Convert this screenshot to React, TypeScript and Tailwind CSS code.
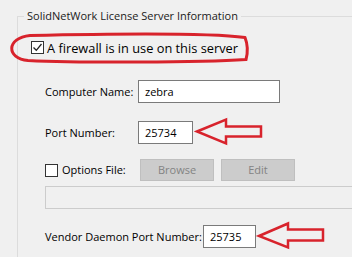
export default function App() {
  const input =
    "h-[23px] border border-[#7a7a7a] bg-white flex items-center pl-[6px] shrink-0";
  return (
    <div className="relative w-[352px] h-[257px] overflow-hidden bg-[#f0f0f0] text-[11px] leading-[16px] text-black font-['Open_Sans',sans-serif] whitespace-nowrap">
      <div className="relative ml-[17px] mt-[16px] h-[300px] border-l border-t border-[#dcdcdc]">
        <div className="absolute -top-[9px] left-[6px] bg-[#f0f0f0] px-[3px] text-[#1a1a1a]">
          SolidNetWork License Server Information
        </div>
        <div className="flex flex-col pl-[13px] pt-[24px]">
          <div className="flex items-center h-[13px] gap-[3px]">
            <div className="w-[13px] h-[13px] border border-[#333] bg-white flex items-center justify-center shrink-0">
              <svg width="11" height="11" viewBox="0 0 11 11">
                <path d="M1.5 5.5 L4.3 8.3 L9.5 2" fill="none" stroke="#222" strokeWidth="1.3" />
              </svg>
            </div>
            <span className="text-[12.8px]">A firewall is in use on this server</span>
          </div>
          <div className="flex flex-col pl-[14px]">
            <div className="flex items-center mt-[26px]">
              <span className="w-[93px] shrink-0">Computer Name:</span>
              <div className={`${input} w-[142px]`}>zebra</div>
            </div>
            <div className="flex items-center mt-[18px]">
              <span className="w-[93px] shrink-0">Port Number:</span>
              <div className={`${input} w-[55px]`}>25734</div>
            </div>
            <div className="flex items-center mt-[15px] h-[22px]">
              <div className="w-[13px] h-[13px] border border-[#333] bg-white shrink-0" />
              <span className="ml-[4px] w-[78px] shrink-0">Options File:</span>
              <div className="w-[74px] h-[22px] bg-[#cccccc] border border-[#bfbfbf] flex items-center justify-center text-[#838383] shrink-0">
                Browse
              </div>
              <div className="ml-[7px] w-[74px] h-[22px] bg-[#cccccc] border border-[#bfbfbf] flex items-center justify-center text-[#838383] shrink-0">
                Edit
              </div>
            </div>
            <div className="mt-[5px] h-[23px] w-[340px] border border-[#cccccc] bg-[#f0f0f0]" />
            <div className="flex items-center mt-[16px]">
              <span className="w-[158px] shrink-0">Vendor Daemon Port Number:</span>
              <div className={`${input} w-[53px]`}>25735</div>
            </div>
          </div>
        </div>
      </div>
      <svg className="absolute left-0 top-0 pointer-events-none" width="352" height="257" viewBox="0 0 352 257">
        <path
          d="M30 35.5 C120 33.5 215 33.5 245 37.5 C248 45 248 52 246 59.5 C200 62.5 80 63 28 60.5 C6 58.5 6 38 30 35.5 Z"
          fill="none"
          stroke="#d8232c"
          strokeWidth="3"
        />
        <path
          d="M197 131.5 L226 119.5 L226 126.5 L261 126.5 L261 136.5 L226 136.5 L226 143.5 Z"
          fill="none"
          stroke="#d8232c"
          strokeWidth="2.5"
          strokeLinejoin="miter"
        />
        <path
          d="M259 236 L288 223.5 L288 229.5 L323 229.5 L323 240.5 L288 240.5 L288 247.5 Z"
          fill="none"
          stroke="#d8232c"
          strokeWidth="2.5"
          strokeLinejoin="miter"
        />
      </svg>
    </div>
  );
}
